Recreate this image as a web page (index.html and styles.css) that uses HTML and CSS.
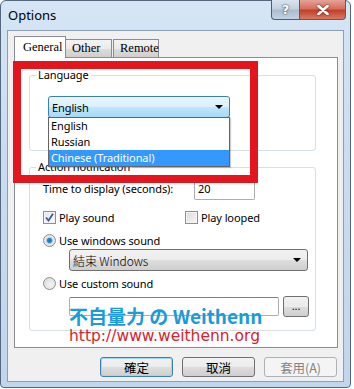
FILE: index.html
```html
<!DOCTYPE html>
<html lang="en">
<head>
    <meta charset="UTF-8">
    <title>Options</title>
    <link rel="stylesheet" href="styles.css">
</head>
<body>
    <div class="window">
        <!-- Title bar -->
        <div class="titlebar">
            <span class="title">Options</span>
            <div class="caption-btns">
                <div class="cap-btn help">?</div>
                <div class="cap-btn close">
                    <svg width="12" height="10" viewBox="0 0 12 10">
                        <path d="M1.5 1 L10.5 9 M10.5 1 L1.5 9" stroke="#fff" stroke-width="2.6" stroke-linecap="round"/>
                    </svg>
                </div>
            </div>
        </div>

        <div class="client">
            <div class="tabs">
                <div class="tab active">General</div>
                <div class="tab">Other</div>
                <div class="tab">Remote</div>
            </div>

            <div class="panel">
                <div class="group group-lang">
                    <span class="group-label">Language</span>
                    <div class="combo-wrap">
                        <div class="combo hot">
                            <span>English</span>
                            <span class="arrow"></span>
                        </div>
                        <div class="combo-list">
                            <div class="combo-item">English</div>
                            <div class="combo-item">Russian</div>
                            <div class="combo-item selected">Chinese (Traditional)</div>
                        </div>
                    </div>
                </div>

                <div class="group group-notify">
                    <span class="group-label">Action notification</span>

                    <div class="row row-time">
                        <span class="time-label">Time to display (seconds):</span>
                        <div class="textbox time-box">20</div>
                    </div>

                    <div class="row row-checks">
                        <label class="check-item sound">
                            <span class="checkbox checked">
                                <svg width="9" height="9" viewBox="0 0 9 9">
                                    <path d="M1 4.5 L3.5 7.5 L8 0.8" fill="none" stroke="#3b5aa0" stroke-width="1.8"/>
                                </svg>
                            </span>
                            Play sound
                        </label>
                        <label class="check-item">
                            <span class="checkbox"></span>
                            Play looped
                        </label>
                    </div>

                    <div class="row row-radio">
                        <span class="radio checked"></span>
                        Use windows sound
                    </div>

                    <div class="row row-select">
                        <div class="dropdown">
                            <span>結束 Windows</span>
                            <span class="arrow"></span>
                        </div>
                    </div>

                    <div class="row row-radio custom">
                        <span class="radio"></span>
                        Use custom sound
                    </div>

                    <div class="row row-path">
                        <div class="textbox path-box"></div>
                        <div class="btn browse">...</div>
                    </div>

                    <div class="watermark">
                        <div class="wm-name">不自量力 の Weithenn</div>
                        <div class="wm-url">http://www.weithenn.org</div>
                    </div>
                </div>
            </div>

            <div class="buttons">
                <div class="btn default">確定</div>
                <div class="btn">取消</div>
                <div class="btn disabled">套用(A)</div>
            </div>
        </div>

        <!-- Annotation drawn over the dialog -->
        <div class="red-box"></div>
    </div>
</body>
</html>
```

FILE: styles.css
```css
:root {
    --frame-top: #d5e5f5;
    --frame-bottom: #c0d6ed;
    --face: #f0f0f0;
    --tab-border: #898c95;
    --group-border: #d5dfe5;
    --text: #000000;
    --ui-font: 'Noto Sans', 'Noto Sans CJK TC', sans-serif;
    --cjk-font: 'Noto Sans CJK TC', 'Noto Sans', sans-serif;
}

* {
    margin: 0;
    padding: 0;
    box-sizing: border-box;
}

body {
    background: #ffffff;
    font-family: var(--ui-font);
    font-size: 11px;
    letter-spacing: -0.1px;
    color: var(--text);
}

/* Window frame */
.window {
    position: relative;
    width: 351px;
    height: 388px;
    border: 1px solid #55677d;
    border-radius: 6px 6px 4px 4px;
    background: linear-gradient(180deg, var(--frame-top) 0%, #cadcf0 40%, var(--frame-bottom) 100%);
    display: flex;
    flex-direction: column;
}

.titlebar {
    height: 29px;
    display: flex;
    justify-content: space-between;
    align-items: flex-start;
    padding-left: 7px;
}

.title {
    font-size: 13px;
    letter-spacing: 0;
    line-height: 28px;
    color: #000;
}

.caption-btns {
    display: flex;
    margin-right: 4px;
    margin-top: -1px;
}

.cap-btn {
    height: 20px;
    border: 1px solid #4d5f77;
    border-top: none;
    display: flex;
    align-items: center;
    justify-content: center;
}

.cap-btn.help {
    width: 28px;
    border-radius: 0 0 0 4px;
    border-right: none;
    background: linear-gradient(180deg, #dbe4ee 0%, #c2d0df 48%, #a9bbcf 52%, #c3d3e4 100%);
    color: #fff;
    font-family: 'DejaVu Sans', sans-serif;
    font-weight: bold;
    font-size: 13px;
    text-shadow: 0 0 2px #33475f, 0 0 1px #33475f;
}

.cap-btn.close {
    width: 47px;
    border-radius: 0 0 4px 0;
    background: linear-gradient(180deg, #e5a497 0%, #d56f5e 45%, #c1402a 55%, #d9795f 100%);
}

.cap-btn.close svg {
    filter: drop-shadow(0 0 1px #5a1a10);
}

/* Client area */
.client {
    margin: 0 6px 5px 6px;
    flex: 1;
    background: var(--face);
    border: 1px solid #8d9fb5;
    padding: 6px 6px 0 6px;
    display: flex;
    flex-direction: column;
}

.tabs {
    display: flex;
    align-items: flex-end;
    height: 20px;
    position: relative;
    z-index: 1;
}

.tab {
    font-family: 'Liberation Serif', serif;
    font-size: 12.5px;
    letter-spacing: 0;
    height: 18px;
    line-height: 16px;
    padding: 0 6px;
    border: 1px solid var(--tab-border);
    border-bottom: none;
    margin-left: -1px;
    background: linear-gradient(180deg, #f3f3f3 0%, #ebebeb 50%, #dddddd 51%, #cfcfcf 100%);
    color: #000;
}

.tab:nth-child(2) {
    width: 47px;
}

.tab:nth-child(3) {
    width: 46px;
    margin-left: 1px;
}

.tab.active {
    margin-left: 0;
    width: 52px;
    height: 22px;
    line-height: 20px;
    padding-left: 8px;
    margin-bottom: -1px;
    background: #ffffff;
    z-index: 2;
}

.panel {
    width: 324px;
    height: 291px;
    background: #ffffff;
    border: 1px solid var(--tab-border);
    padding: 17px 0 0 14px;
}

/* Group boxes */
.group {
    position: relative;
    width: 287px;
    border: 1px solid var(--group-border);
    border-radius: 3px;
}

.group-label {
    position: absolute;
    top: -9px;
    left: 6px;
    padding: 0 2px;
    background: #ffffff;
    line-height: 16px;
}

.group-lang {
    height: 76px;
    padding: 20px 0 0 18px;
}

.group-notify {
    margin-top: 16px;
    height: 164px;
    padding: 9px 0 0 13px;
}

/* Combo box with dropped list */
.combo-wrap {
    position: relative;
    width: 182px;
}

.combo, .dropdown {
    height: 22px;
    display: flex;
    align-items: center;
    justify-content: space-between;
    padding: 0 6px 0 3px;
    border-radius: 3px;
}

.combo.hot {
    border: 1px solid #3c7fb1;
    background: linear-gradient(180deg, #eaf6fd 0%, #d9f0fc 50%, #bee6fd 51%, #a7d9f5 100%);
}

.arrow {
    width: 0;
    height: 0;
    border-left: 4px solid transparent;
    border-right: 4px solid transparent;
    border-top: 4px solid #000;
}

.combo-list {
    position: absolute;
    top: 21px;
    left: 0;
    width: 182px;
    background: #ffffff;
    border: 1px solid #646464;
    box-shadow: 1px 1px 1px rgba(0, 0, 0, 0.2);
    z-index: 3;
}

.combo-item {
    height: 16px;
    line-height: 16px;
    padding-left: 2px;
}

.combo-item.selected {
    background: #3399ff;
    color: #ffffff;
}

/* Notification rows */
.row {
    display: flex;
    align-items: center;
}

.row-time {
    height: 23px;
}

.time-label {
    width: 151px;
}

.textbox {
    background: #ffffff;
    border: 1px solid #abadb3;
    border-top-color: #7a7f86;
    border-radius: 2px;
}

.time-box {
    width: 61px;
    height: 23px;
    padding: 3px 0 0 3px;
}

.row-checks {
    margin-top: 9px;
    height: 16px;
}

.check-item {
    display: flex;
    align-items: center;
    gap: 3px;
}

.check-item.sound {
    width: 142px;
}

.checkbox {
    width: 13px;
    height: 13px;
    border: 1px solid #8e8f8f;
    background: linear-gradient(135deg, #dcdcdc 0%, #f6f6f6 100%);
    box-shadow: inset 0 0 0 1px #f4f4f4;
    display: flex;
    align-items: center;
    justify-content: center;
}

.checkbox.checked {
    background: linear-gradient(135deg, #e4e4e4 0%, #fbfbfb 100%);
}

.row-radio {
    margin-top: 7px;
    height: 16px;
    gap: 3px;
}

.row-radio.custom {
    margin-top: 4px;
}

.radio {
    width: 13px;
    height: 13px;
    border-radius: 50%;
    border: 1px solid #8e8f8f;
    background: radial-gradient(circle at 60% 60%, #f4f4f4 0%, #d6d6d6 100%);
}

.radio.checked {
    background: radial-gradient(circle at 50% 50%, #1a6fb6 0%, #2e8ad4 28%, #8cc3ea 36%, #eaeaea 50%, #d8d8d8 100%);
}

.row-select {
    margin-top: 1px;
    padding-left: 26px;
}

.dropdown {
    width: 239px;
    height: 22px;
    border: 1px solid #707070;
    background: linear-gradient(180deg, #f2f2f2 0%, #ebebeb 50%, #dddddd 51%, #cfcfcf 100%);
    font-family: var(--cjk-font);
    font-size: 12px;
    font-weight: 300;
}

.row-path {
    margin-top: 5px;
    padding-left: 26px;
    gap: 4px;
}

.path-box {
    width: 210px;
    height: 19px;
}

.btn {
    height: 20px;
    border: 1px solid #707070;
    border-radius: 3px;
    background: linear-gradient(180deg, #f2f2f2 0%, #ebebeb 50%, #dddddd 51%, #cfcfcf 100%);
    display: flex;
    align-items: center;
    justify-content: center;
    font-family: var(--cjk-font);
    font-size: 12.5px;
}

.btn.browse {
    width: 26px;
    height: 21px;
    font-family: var(--ui-font);
    font-size: 11px;
    line-height: 1;
    padding-bottom: 3px;
}

.watermark {
    position: absolute;
    left: 39px;
    top: 137px;
    white-space: nowrap;
    letter-spacing: 0;
}

.wm-name {
    font-family: var(--cjk-font);
    font-weight: bold;
    font-size: 19px;
    line-height: 22px;
    color: #1c9ad9;
}

.wm-url {
    font-family: 'DejaVu Sans', sans-serif;
    font-size: 15.5px;
    line-height: 18px;
    color: #d6232c;
}

/* Bottom buttons */
.buttons {
    display: flex;
    justify-content: flex-end;
    gap: 9px;
    margin-top: 9px;
}

.buttons .btn {
    width: 73px;
}

.btn.default {
    border-color: #3c7fb1;
    box-shadow: inset 0 0 0 1px #9fd6f5;
}

.btn.disabled {
    border-color: #adb2b5;
    background: #f4f4f4;
    color: #838383;
}

/* Red annotation */
.red-box {
    position: absolute;
    left: 12px;
    top: 60px;
    width: 245px;
    height: 122px;
    border: 8px solid #e3161e;
    pointer-events: none;
    z-index: 5;
}
```
